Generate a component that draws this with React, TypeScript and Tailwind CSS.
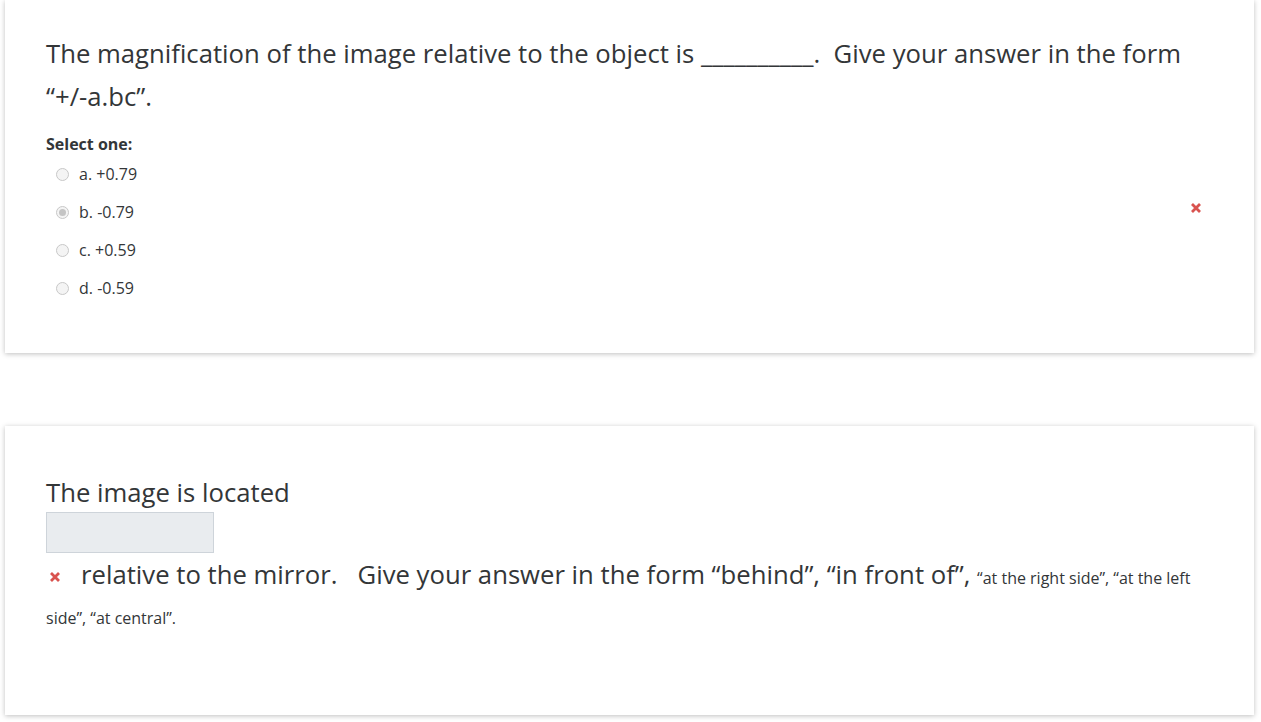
import React from 'react';

const options = [
  { key: 'a', label: '+0.79', checked: false },
  { key: 'b', label: '-0.79', checked: true },
  { key: 'c', label: '+0.59', checked: false },
  { key: 'd', label: '-0.59', checked: false },
];

const Cross: React.FC<{ className?: string }> = ({ className }) => (
  <svg viewBox="0 0 12 12" className={className} aria-hidden="true">
    <path d="M2 2 L10 10 M10 2 L2 10" stroke="#d9534f" strokeWidth="2.8" strokeLinecap="butt" />
  </svg>
);

const Radio: React.FC<{ checked: boolean }> = ({ checked }) => (
  <span className="flex h-[13px] w-[13px] shrink-0 items-center justify-center rounded-full border border-[#c8c8c8] bg-[#f4f4f4]">
    {checked && <span className="h-[7px] w-[7px] rounded-full bg-[#c4c4c4]" />}
  </span>
);

const App: React.FC = () => {
  return (
    <div
      className="min-h-[722px] bg-white pl-[5px] pr-[7px] pb-[7px] text-[#333638]"
      style={{ fontFamily: '"Open Sans", "Noto Sans", sans-serif' }}
    >
      <div className="flex flex-col gap-[73px]">
        <div className="h-[353px] bg-white pl-[41px] pr-[40px] pt-[32px] shadow-[0_1px_5px_rgba(0,0,0,0.25)]">
          <p className="text-[25.7px] leading-[43px]">
            The magnification of the image relative to the object is __________.&nbsp; Give your answer in the form{' '}
            <span className="whitespace-nowrap">“+/-a.bc”.</span>
          </p>
          <div className="mt-[15px] text-[16px] font-bold leading-[22px]">Select one:</div>
          <div className="flex flex-col">
            {options.map((o) => (
              <div key={o.key} className="flex h-[38px] items-center">
                <div className="ml-[10px] flex items-center gap-[10px] text-[16px]">
                  <Radio checked={o.checked} />
                  <span>
                    {o.key}. {o.label}
                  </span>
                </div>
                {o.checked && (
                  <div className="ml-auto mb-[8px] pr-[12px]">
                    <Cross className="h-[12px] w-[12px]" />
                  </div>
                )}
              </div>
            ))}
          </div>
        </div>

        <div className="h-[289px] bg-white pl-[41px] pr-[40px] pt-[48px] shadow-[0_1px_5px_rgba(0,0,0,0.25)]">
          <p className="text-[25.7px] leading-[38px]">The image is located</p>
          <div className="h-[41px] w-[168px] border border-[#ced4da] bg-[#e9ecef]" />
          <p className="mt-[2px] leading-[40px]">
            <Cross className="mr-[20px] ml-[3px] inline-block h-[12px] w-[12px] align-[1px]" />
            <span className="text-[25.7px]">
              relative to the mirror.&nbsp;&nbsp; Give your answer in the form “behind”, “in front of”,{' '}
            </span>
            <span className="text-[16px]">“at the right side”, “at the left side”, “at central”.</span>
          </p>
        </div>
      </div>
    </div>
  );
};

export default App;
